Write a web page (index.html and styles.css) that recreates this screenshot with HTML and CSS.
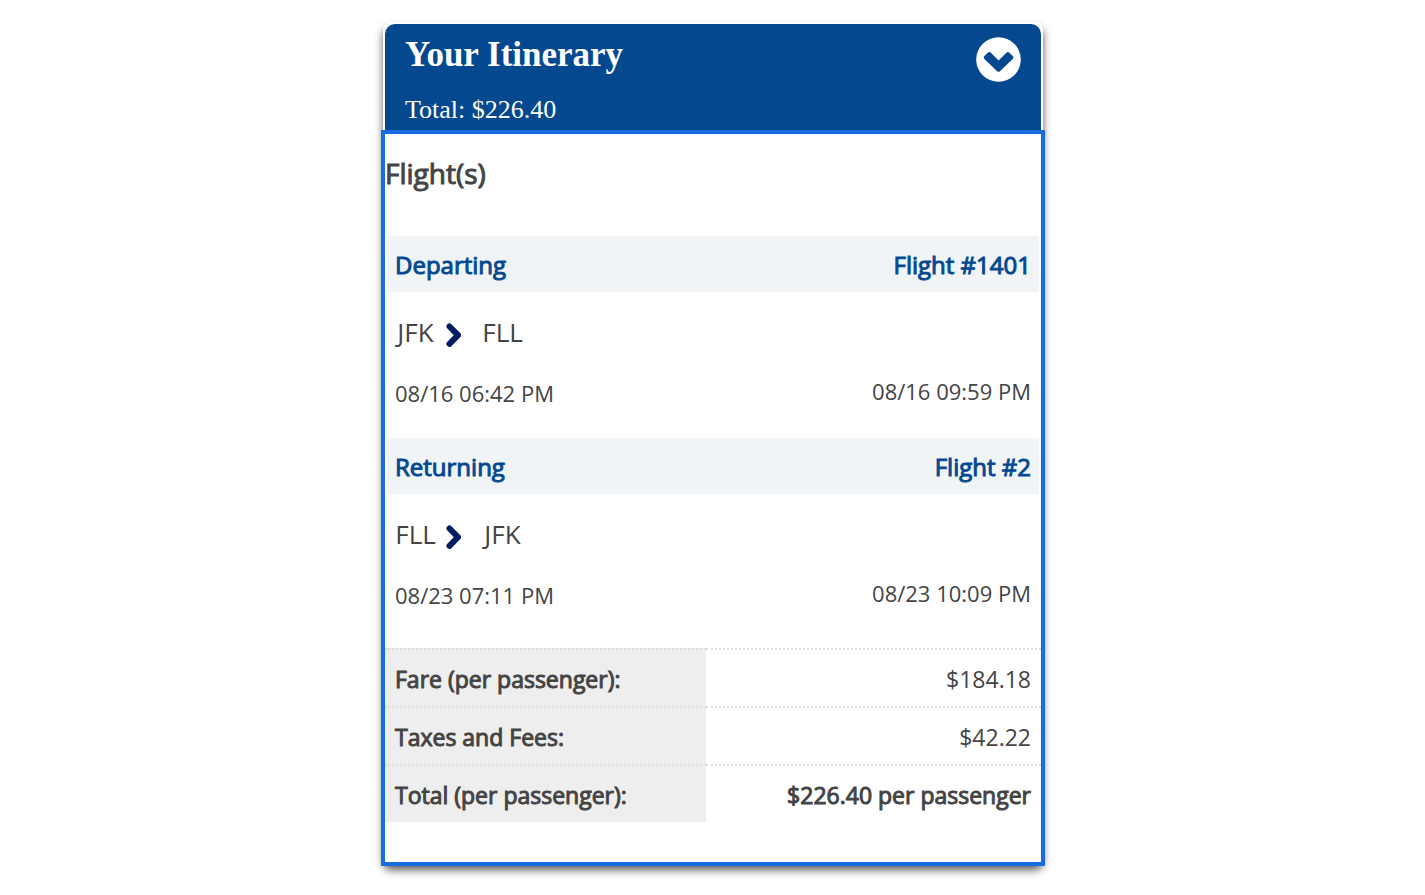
FILE: index.html
```html
<!DOCTYPE html>
<html lang="en">
<head>
<meta charset="utf-8">
<meta name="viewport" content="width=device-width, initial-scale=1">
<title>Your Itinerary</title>
<link rel="stylesheet" href="styles.css">
</head>
<body>
<main class="card">
  <header class="card-header">
    <div class="card-heading">
      <h1 class="card-title">Your Itinerary</h1>
      <p class="card-total">Total: $226.40</p>
    </div>
    <button class="toggle" type="button" aria-label="Toggle itinerary" aria-expanded="true">
      <svg class="toggle-icon" viewBox="0 0 45 45" aria-hidden="true">
        <circle cx="22.5" cy="22.5" r="22.3" fill="#fff"/>
        <path d="M8.2 19.2 12 15.4q1.3-1 2.6 0l8 8 8-8q1.3-1 2.6 0L37 19.2q1 1.3 0 2.6L23.9 34.2q-1.4 1-2.8 0L8.2 21.8q-1-1.3 0-2.6z" fill="#04498f"/>
      </svg>
    </button>
  </header>
  <div class="card-body">
    <h2 class="section-title">Flight(s)</h2>

    <section class="flight">
      <div class="flight-bar"><h3 class="flight-label">Departing</h3><span class="flight-label">Flight #1401</span></div>
      <div class="route">
        <span class="airport">JFK</span>
        <svg class="chevron" viewBox="0 0 16 24" aria-hidden="true"><path d="M3.5 3.5 12 12.2l-8.5 8.7"/></svg>
        <span class="airport">FLL</span>
      </div>
      <div class="times"><time class="depart">08/16 06:42 PM</time><time class="arrive">08/16 09:59 PM</time></div>
    </section>

    <section class="flight">
      <div class="flight-bar"><h3 class="flight-label">Returning</h3><span class="flight-label">Flight #2</span></div>
      <div class="route">
        <span class="airport">FLL</span>
        <svg class="chevron" viewBox="0 0 16 24" aria-hidden="true"><path d="M3.5 3.5 12 12.2l-8.5 8.7"/></svg>
        <span class="airport">JFK</span>
      </div>
      <div class="times"><time class="depart">08/23 07:11 PM</time><time class="arrive">08/23 10:09 PM</time></div>
    </section>

    <table class="fares">
      <tbody>
        <tr><th scope="row">Fare (per passenger):</th><td>$184.18</td></tr>
        <tr><th scope="row">Taxes and Fees:</th><td>$42.22</td></tr>
        <tr class="fares-total"><th scope="row">Total (per passenger):</th><td>$226.40 per passenger</td></tr>
      </tbody>
    </table>
  </div>
</main>
</body>
</html>
```
FILE: styles.css
```css
* {
  box-sizing: border-box;
}

body {
  margin: 0;
  padding: 22px 8px 22px 9px;
  background: #fff;
  color: #444;
  font-family: "Open Sans", "Noto Sans", sans-serif;
  font-size: 24px;
}

h1, h2, h3, p {
  margin: 0;
  font-weight: 400;
}

.card {
  max-width: 660px;
  margin: 0 auto;
  padding: 2px;
  border-radius: 8px;
  background: #fff;
  box-shadow: 0 6px 8px rgba(0, 0, 0, 0.65);
}

.card-header {
  display: flex;
  justify-content: space-between;
  align-items: flex-start;
  padding: 13px 20px 7px;
  border-radius: 10px 10px 0 0;
  background: #04498f;
  color: #fff;
  font-family: "Liberation Serif", serif;
}

.card-title {
  font-size: 35px;
  font-weight: 700;
  line-height: 36px;
}

.card-total {
  margin-top: 20px;
  font-size: 26px;
  line-height: 34px;
}

.toggle {
  padding: 0;
  border: 0;
  background: none;
  cursor: pointer;
}

.toggle-icon {
  display: block;
  width: 45px;
  height: 45px;
}

.card-body {
  padding-bottom: 40px;
  outline: 4px solid #1a6be0;
}

.section-title {
  padding: 19px 0 43px;
  font-size: 28px;
  line-height: 40px;
  -webkit-text-stroke: 1px;
}

.flight {
  padding: 0 2px 25px;
}

.flight-bar {
  display: flex;
  justify-content: space-between;
  padding: 13px 8px 11px;
  background: #f0f4f7;
  color: #04498f;
}

.flight-label {
  font-size: 24px;
  line-height: 32px;
  -webkit-text-stroke: 1px;
}

.route {
  display: flex;
  align-items: center;
  padding: 22px 8px 23px;
  font-size: 26px;
  line-height: 36px;
}

.airport {
  width: 41px;
  text-align: center;
}

.chevron {
  width: 16px;
  height: 24px;
  margin: 6px 20px 0 10px;
  fill: none;
  stroke: #021e60;
  stroke-width: 6;
  stroke-linecap: round;
  stroke-linejoin: round;
}

.times {
  display: flex;
  justify-content: space-between;
  align-items: flex-start;
  padding: 0 8px;
  font-size: 22px;
}

.depart {
  line-height: 40px;
}

.arrive {
  line-height: 36px;
}

.fares {
  width: 100%;
  margin-top: 8px;
  border-collapse: separate;
  border-spacing: 0;
  font-size: 23px;
  line-height: 32px;
}

.fares th,
.fares td {
  padding: 13px 10px 11px;
  border-top: 2px dotted #ddd;
}

.fares th {
  width: 49%;
  background: #eee;
  font-weight: 400;
  text-align: left;
  -webkit-text-stroke: 1px;
}

.fares td {
  text-align: right;
}

.fares-total td {
  -webkit-text-stroke: 1px;
}
```
